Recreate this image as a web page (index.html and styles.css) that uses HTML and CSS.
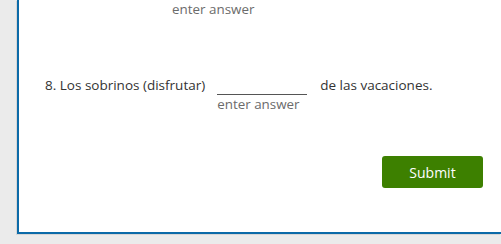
FILE: index.html
```html
<!DOCTYPE html>
<html>
<head>
<meta charset="utf-8">
<link rel="stylesheet" href="styles.css">
</head>
<body>
<div class="panel">
  <div class="prev">
    <span class="hint prev-hint">enter answer</span>
  </div>
  <div class="item">
    <span class="label">8. Los sobrinos (disfrutar)</span>
    <span class="field">
      <span class="line"></span>
      <span class="hint">enter answer</span>
    </span>
    <span class="label">de las vacaciones.</span>
  </div>
  <div class="actions">
    <button class="submit">Submit</button>
  </div>
</div>
</body>
</html>
```

FILE: styles.css
```css
html, body {
  margin: 0;
  padding: 0;
  background: #ebebeb;
  height: 100%;
  overflow: hidden;
}
body {
  font-family: "Open Sans", "Noto Sans", sans-serif;
}
.panel {
  margin-left: 17px;
  height: 232px;
  background: #fff;
  border-left: 2px solid #0b6aa8;
  border-bottom: 2px solid #0b6aa8;
  box-shadow: -1px 1px 0 #d6d6d6;
  display: flex;
  flex-direction: column;
}
.prev {
  padding-left: 153px;
  height: 20px;
}
.hint {
  font-size: 13.4px;
  color: #6b6b6b;
  line-height: 18px;
}
.prev-hint {
  display: block;
  margin-top: 0;
}
.item {
  display: flex;
  align-items: flex-start;
  padding-left: 26px;
  margin-top: 56px;
  font-size: 13.5px;
  color: #333;
}
.label {
  line-height: 18px;
}
.field {
  display: flex;
  flex-direction: column;
  width: 90px;
  margin-left: 12px;
  margin-right: 13px;
}
.line {
  height: 18px;
  border-bottom: 1px solid #555;
}
.actions {
  display: flex;
  justify-content: flex-end;
  padding-right: 18px;
  margin-top: 43px;
}
.submit {
  width: 101px;
  height: 32px;
  border: none;
  border-radius: 3px;
  background: #3d8000;
  color: #fff;
  font-family: "Open Sans", "Noto Sans", sans-serif;
  font-size: 14px;
  padding: 0;
}
```
